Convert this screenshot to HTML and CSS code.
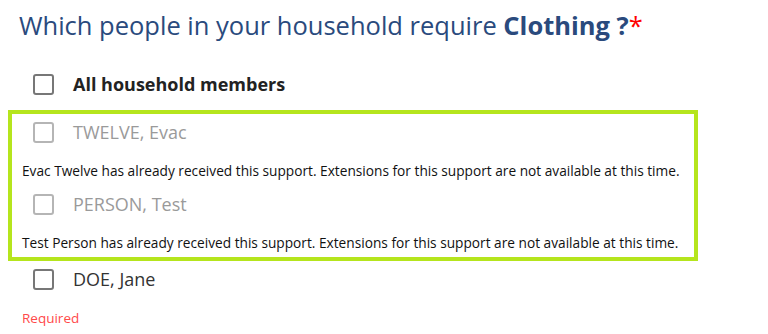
FILE: index.html
```html
<!DOCTYPE html>
<html lang="en">
<head>
  <meta charset="UTF-8" />
  <meta name="viewport" content="width=device-width, initial-scale=1.0" />
  <title>Household support</title>
  <link rel="stylesheet" href="styles.css">
</head>
<body>

<fieldset class="question">
  <h2 class="question-title">Which people in your household require <strong>Clothing ?</strong><span class="req">*</span></h2>

  <label class="option option-all">
    <span class="box"></span>
    <span class="option-label">All household members</span>
  </label>

  <div class="received">
    <label class="option is-disabled">
      <span class="box"></span>
      <span class="option-label">TWELVE, Evac</span>
    </label>
    <p class="note">Evac Twelve has already received this support. Extensions for this support are not available at this time.</p>

    <label class="option is-disabled">
      <span class="box"></span>
      <span class="option-label">PERSON, Test</span>
    </label>
    <p class="note">Test Person has already received this support. Extensions for this support are not available at this time.</p>
  </div>

  <label class="option">
    <span class="box"></span>
    <span class="option-label">DOE, Jane</span>
  </label>

  <div class="error">Required</div>
</fieldset>

</body>
</html>
```

FILE: styles.css
```css
:root {
  --bg: #ffffff;
  --title: #2a4a7d;
  --text-main: #222;
  --text-body: #333;
  --text-muted: #9a9a9a;
  --box: #777;
  --box-muted: #b5b5b5;
  --highlight: #b5e51d;
  --error: #ff4a4a;
}

* {
  margin: 0;
  padding: 0;
  box-sizing: border-box;
}

body {
  font-family: 'Open Sans', 'Noto Sans', sans-serif;
  background: var(--bg);
  color: var(--text-main);
}

.question {
  border: none;
  padding-top: 9px;
}

.question-title {
  font-size: 25.5px;
  font-weight: normal;
  line-height: 32px;
  color: var(--title);
  padding-left: 19px;
  margin-bottom: 25px;
}

.question-title strong {
  font-weight: bold;
}

.req {
  color: #f00;
}

.option {
  display: flex;
  align-items: center;
  height: 36px;
  padding-left: 33px;
  gap: 19px;
  font-size: 18px;
  color: var(--text-body);
  cursor: pointer;
}

.option-all .option-label {
  font-weight: bold;
  color: var(--text-main);
}

.box {
  width: 21px;
  height: 21px;
  border: 2px solid var(--box);
  border-radius: 3px;
  background: #fff;
  flex-shrink: 0;
}

.received {
  margin: 8px 0 0 8px;
  width: 690px;
  border: 4px solid var(--highlight);
}

.received .option {
  padding-left: 21px;
}

.is-disabled {
  color: var(--text-muted);
  cursor: default;
}

.is-disabled .box {
  border-color: var(--box-muted);
}

.note {
  font-size: 13.7px;
  line-height: 18px;
  color: #111;
  padding-left: 10px;
  margin: 12px 0 6px;
}

.note:last-child {
  margin-bottom: 5px;
}

.error {
  font-size: 13.5px;
  line-height: 18px;
  color: var(--error);
  padding-left: 22px;
  margin-top: 12px;
}
```
